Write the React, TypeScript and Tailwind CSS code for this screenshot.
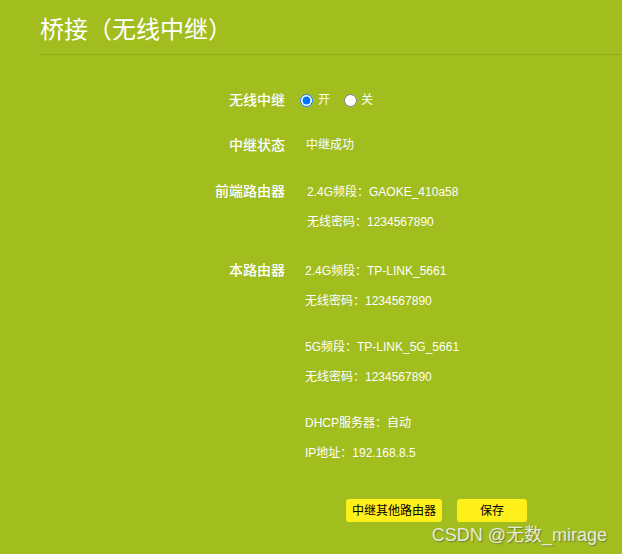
import React from "react";

const font = { fontFamily: '"Liberation Sans", "Noto Sans CJK SC", sans-serif' };

function Row({ label, children, className = "" }: { label: string; children: React.ReactNode; className?: string }) {
  return (
    <div className={"flex items-start " + className}>
      <div className="w-[285px] shrink-0 text-right text-[14px] font-medium leading-[20px] text-white">{label}</div>
      <div className="ml-[20px] flex flex-col text-[12px] leading-[20px] text-white">{children}</div>
    </div>
  );
}

export default function App() {
  return (
    <div className="relative h-[554px] w-full overflow-hidden bg-[#a1bd1e]" style={font}>
      <div className="ml-[40px] h-[55px] border-b border-[#90aa1a] pt-[12px]">
        <h1 className="text-[24px] leading-[32px] text-white" style={{ fontFamily: '"Noto Sans CJK SC", sans-serif' }}>
          桥接（无线中继）
        </h1>
      </div>

      <Row label="无线中继" className="mt-[35px]">
        <div className="flex h-[20px] items-center">
          <input type="radio" name="r" defaultChecked className="m-0 ml-[-5px] h-[13px] w-[13px]" />
          <span className="ml-[5px]">开</span>
          <input type="radio" name="r" className="m-0 ml-[14px] h-[13px] w-[13px]" />
          <span className="ml-[4px]">关</span>
        </div>
      </Row>

      <Row label="中继状态" className="mt-[25px]">
        <span className="ml-[1px]">中继成功</span>
      </Row>

      <Row label="前端路由器" className="mt-[26px]">
        <span className="ml-[2px] mt-[1px]">2.4G频段：GAOKE_410a58</span>
        <span className="ml-[2px] mt-[10px]">无线密码：1234567890</span>
      </Row>

      <Row label="本路由器" className="mt-[28px]">
        <span className="mt-[1px]">2.4G频段：TP-LINK_5661</span>
        <span className="mt-[10px]">无线密码：1234567890</span>
        <span className="mt-[26px]">5G频段：TP-LINK_5G_5661</span>
        <span className="mt-[10px]">无线密码：1234567890</span>
        <span className="mt-[26px]">DHCP服务器：自动</span>
        <span className="mt-[10px]">IP地址：192.168.8.5</span>
      </Row>

      <div className="ml-[346px] mt-[36px] flex gap-[15px]">
        <button className="h-[23px] w-[96px] rounded-[3px] bg-[#fff01c] text-[12px] text-black">中继其他路由器</button>
        <button className="h-[23px] w-[70px] rounded-[3px] bg-[#fff01c] text-[12px] text-black">保存</button>
      </div>

      <div
        className="absolute right-[15px] bottom-[8px] text-[18px] leading-[22px] text-[#e6ebd8]"
        style={{ textShadow: "1px 1px 1px rgba(80,90,60,0.6)" }}
      >
        CSDN @无数_mirage
      </div>
    </div>
  );
}
